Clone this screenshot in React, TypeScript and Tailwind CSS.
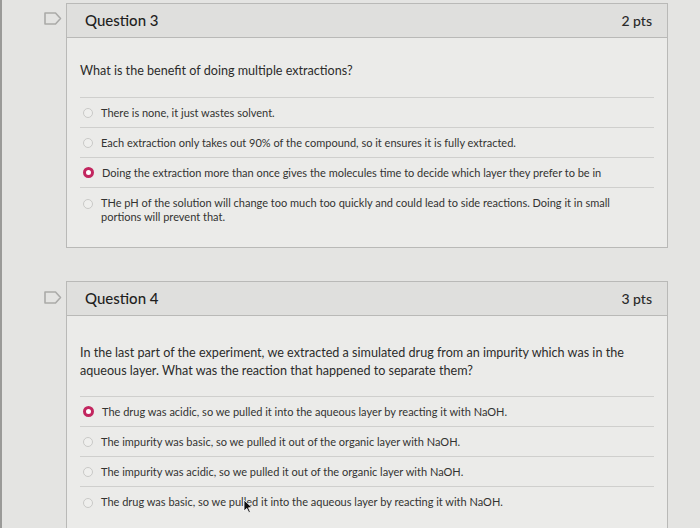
import type { ReactNode } from "react";

type Answer = { text: ReactNode; selected?: boolean };

const q3: Answer[] = [
  { text: "There is none, it just wastes solvent." },
  { text: "Each extraction only takes out 90% of the compound, so it ensures it is fully extracted." },
  {
    text: "Doing the extraction more than once gives the molecules time to decide which layer they prefer to be in",
    selected: true,
  },
  {
    text: (
      <>
        THe pH of the solution will change too much too quickly and could lead to side reactions. Doing it in small
        <br />
        portions will prevent that.
      </>
    ),
  },
];

const q4: Answer[] = [
  { text: "The drug was acidic, so we pulled it into the aqueous layer by reacting it with NaOH.", selected: true },
  { text: "The impurity was basic, so we pulled it out of the organic layer with NaOH." },
  { text: "The impurity was acidic, so we pulled it out of the organic layer with NaOH." },
  { text: "The drug was basic, so we pulled it into the aqueous layer by reacting it with NaOH." },
];

function Flag() {
  return (
    <svg width="18" height="13" viewBox="0 0 18 13" className="text-[#aaaaa8]">
      <path
        d="M1 1 H11.5 L16.5 6.5 L11.5 12 H1 Z"
        fill="none"
        stroke="currentColor"
        strokeWidth="1.6"
        strokeLinejoin="round"
      />
    </svg>
  );
}

function Radio({ selected }: { selected?: boolean }) {
  if (selected) {
    return (
      <span className="box-border block h-[11px] w-[11px] shrink-0 rounded-full border-[3px] border-[#c2265f] bg-white" />
    );
  }
  return <span className="box-border block h-[10px] w-[10px] shrink-0 rounded-full border border-[#c9c9c7] bg-[#efefed]" />;
}

function Answers({ items }: { items: Answer[] }) {
  return (
    <div className="border-t border-[#cfcfcd]">
      {items.map((a, i) => (
        <div
          key={i}
          className={`flex gap-[8px] pl-[3px] ${i < items.length - 1 ? "h-[30px] items-center border-b border-[#cfcfcd]" : "items-start pt-[8px]"}`}
        >
          <div className={i < items.length - 1 ? "" : "pt-[3px]"}>
            <Radio selected={a.selected} />
          </div>
          <div className="text-[11px] leading-[14px] text-[#333331]">{a.text}</div>
        </div>
      ))}
    </div>
  );
}

function Question({
  n,
  pts,
  children,
  flagTop,
}: {
  n: number;
  pts: string;
  children: ReactNode;
  flagTop: string;
}) {
  return (
    <div className="flex">
      <div className={`w-[66px] shrink-0 pl-[44px] ${flagTop}`}>
        <Flag />
      </div>
      <div className="w-[602px] border border-[#b9b9b7] bg-[#ebebe9]">
        <div className="flex h-[34px] items-center justify-between border-b border-[#b9b9b7] bg-[#dfdfdd] pl-[18px] pr-[15px]">
          <span className="text-[15px] font-medium text-[#1f1f1f]">Question {n}</span>
          <span className="text-[14px] font-medium text-[#2a2a2a]">{pts}</span>
        </div>
        {children}
      </div>
    </div>
  );
}

export default function App() {
  return (
    <div
      className="relative h-[528px] w-[700px] overflow-hidden border-l-2 border-[#9a9a98] bg-[#e4e4e2] pt-[3px]"
      style={{ fontFamily: "Lato, 'Open Sans', sans-serif" }}
    >
      <div className="-ml-[2px] flex flex-col gap-[33px]">
        <Question n={3} pts="2 pts" flagTop="pt-[9px]">
          <div className="h-[209px] pl-[13px] pr-[13px] pt-[24px]">
            <p className="text-[12.6px] leading-[18px] text-[#2b2b2b]">
              What is the benefit of doing multiple extractions?
            </p>
            <div className="mt-[17px]">
              <Answers items={q3} />
            </div>
          </div>
        </Question>
        <Question n={4} pts="3 pts" flagTop="pt-[10px]">
          <div className="h-[240px] pl-[13px] pr-[13px] pt-[28px]">
            <p className="text-[12.6px] leading-[18px] text-[#2b2b2b]">
              In the last part of the experiment, we extracted a simulated drug from an impurity which was in the
              <br />
              aqueous layer. What was the reaction that happened to separate them?
            </p>
            <div className="mt-[16px]">
              <Answers items={q4} />
            </div>
          </div>
        </Question>
      </div>
      <svg
        className="absolute left-[241px] top-[499px]"
        width="10"
        height="15"
        viewBox="0 0 10 15"
      >
        <path d="M1 1 L1 12 L3.8 9.4 L5.8 13.6 L7.4 12.9 L5.5 8.8 L9 8.6 Z" fill="#111" stroke="#fff" strokeWidth="0.8" />
      </svg>
    </div>
  );
}
